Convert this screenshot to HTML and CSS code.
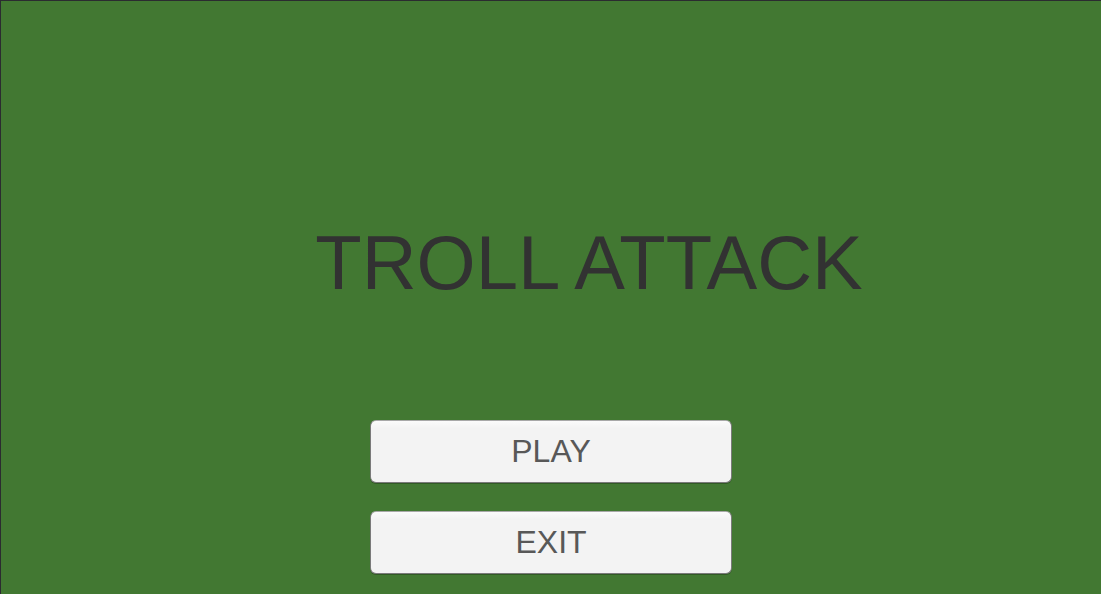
FILE: index.html
```html
<!DOCTYPE html>
<html lang="en">
<head>
    <meta charset="UTF-8">
    <meta name="viewport" content="width=device-width, initial-scale=1.0">
    <title>Troll Attack</title>
    <link rel="stylesheet" href="styles.css">
</head>
<body>

    <div class="menu">
        <h1 class="title">TROLL ATTACK</h1>

        <div class="buttons">
            <button class="menu-btn">PLAY</button>
            <button class="menu-btn">EXIT</button>
        </div>
    </div>

</body>
</html>
```

FILE: styles.css
```css
html, body {
    margin: 0;
    height: 100%;
}

body {
    box-sizing: border-box;
    background-color: #427832; /* grass green */
    border-top: 1px solid #2b2b30;
    border-left: 1px solid #2b2b30;
    font-family: "Liberation Sans", Arial, sans-serif;
    overflow: hidden;
}

.menu {
    display: flex;
    flex-direction: column;
    align-items: center;
}

.title {
    margin: 224px 0 0;
    padding-left: 76px;
    font-size: 76px;
    font-weight: normal;
    line-height: 76px;
    color: #323232;
    white-space: nowrap;
}

.buttons {
    display: flex;
    flex-direction: column;
    gap: 28px;
    margin-top: 119px;
}

.menu-btn {
    width: 362px;
    height: 63px;
    padding: 0;
    font-family: inherit;
    font-size: 32px;
    color: #585858;
    background: linear-gradient(#fbfbfb, #f3f3f3 12%, #f3f3f3);
    border: 1px solid #7a7a7a;
    border-top-color: #a8a8a8;
    border-radius: 6px;
    box-shadow: 0 1px 0 rgba(0, 0, 0, 0.25);
    cursor: pointer;
}

.menu-btn:hover {
    background: #ffffff;
}
```
